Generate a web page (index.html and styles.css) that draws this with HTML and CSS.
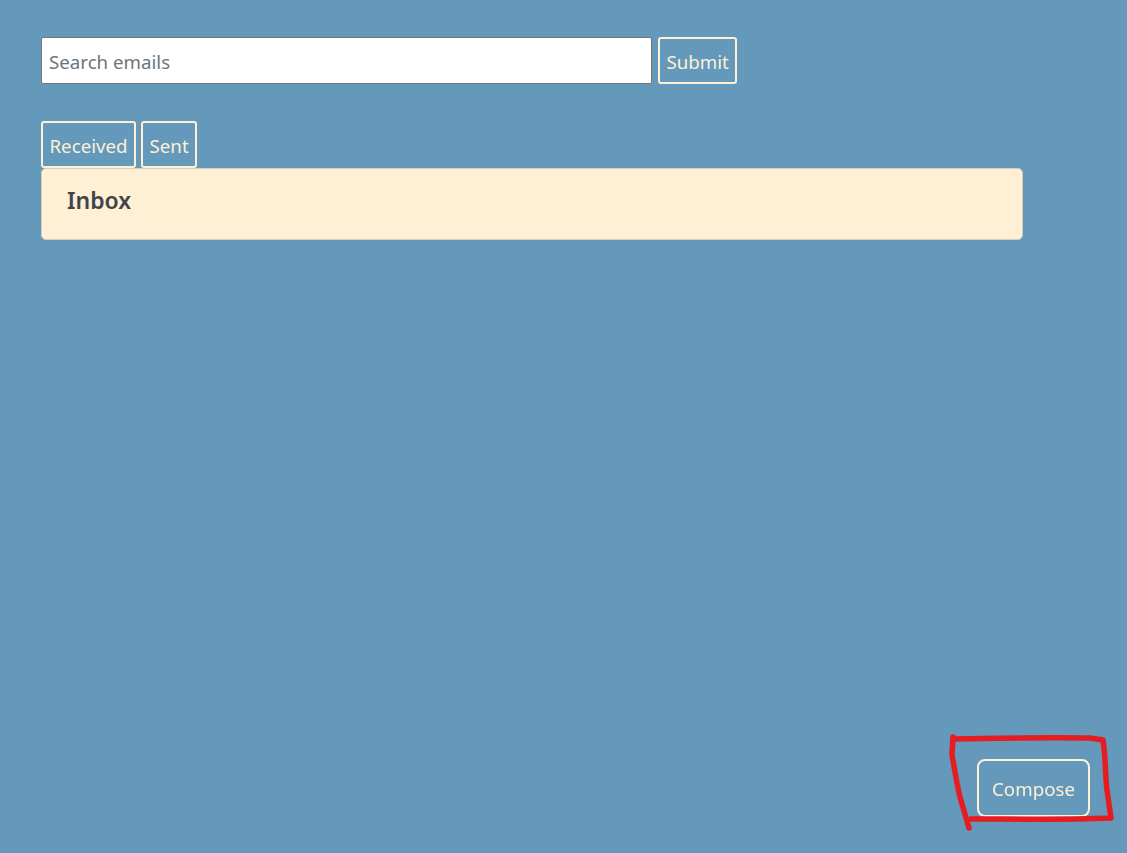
FILE: index.html
```html
<!DOCTYPE html>
<html lang="en">
<head>
  <meta charset="UTF-8">
  <meta name="viewport" content="width=device-width, initial-scale=1.0">
  <title>Mail</title>
  <link rel="stylesheet" href="styles.css">
</head>
<body>
  <div class="container">
    <form class="search-form">
      <input class="search-input" type="text" placeholder="Search emails">
      <button class="btn" type="button">Submit</button>
    </form>

    <div class="tabs">
      <button class="btn" type="button">Received</button>
      <button class="btn" type="button">Sent</button>
    </div>

    <div class="mail-card">
      <h2>Inbox</h2>
    </div>
  </div>

  <button class="btn btn-compose" type="button">Compose</button>

  <!-- hand drawn marker around compose -->
  <svg class="marker" width="1127" height="853" viewBox="0 0 1127 853">
    <path d="M953 737 L952 755 C955 772 957 785 960 797 L969 828" />
    <path d="M953 739 C1000 738 1050 737 1090 738 L1103 740 C1106 760 1105 775 1107 790 L1111 818 C1060 820 1010 819 971 819" />
  </svg>
</body>
</html>
```

FILE: styles.css
```css
body {
  font-family: "Noto Sans", "Open Sans", sans-serif;
  background-color: #6499bb;
  margin: 0;
  height: 853px;
  overflow: hidden;
}

.container {
  padding: 37px 0 0 41px;
  width: 982px;
}

.search-form {
  display: flex;
  gap: 6px;
  height: 47px;
}

.search-input {
  width: 611px;
  box-sizing: border-box;
  border: 1px solid #767676;
  border-radius: 2px;
  padding: 2px 7px 0;
  font-family: inherit;
  font-size: 18.7px;
  background: white;
  color: #333;
}

.search-input::placeholder {
  color: #6c757d;
  opacity: 1;
}

.btn {
  background: transparent;
  border: 2px solid #fff0d5;
  border-radius: 3px;
  color: #fff0d5;
  font-family: inherit;
  font-size: 18.7px;
  padding: 2px 6.5px 0;
  cursor: pointer;
}

.tabs {
  display: flex;
  gap: 5px;
  height: 47px;
  margin-top: 37px;
}

.mail-card {
  background-color: #fff0d5;
  border: 1px solid #d5ceb9;
  border-radius: 5px;
  height: 72px;
  box-sizing: border-box;
  padding: 0 25px 8px;
  display: flex;
  align-items: center;
}

.mail-card h2 {
  margin: 0;
  font-size: 23px;
  font-weight: 600;
  color: #3f4447;
}

.btn-compose {
  position: fixed;
  left: 977px;
  top: 759px;
  width: 113px;
  height: 58px;
  border-radius: 8px;
  padding: 0;
}

.marker {
  position: fixed;
  left: 0;
  top: 0;
  pointer-events: none;
}

.marker path {
  fill: none;
  stroke: #e61c23;
  stroke-width: 5.5;
  stroke-linecap: round;
  stroke-linejoin: round;
}
```
